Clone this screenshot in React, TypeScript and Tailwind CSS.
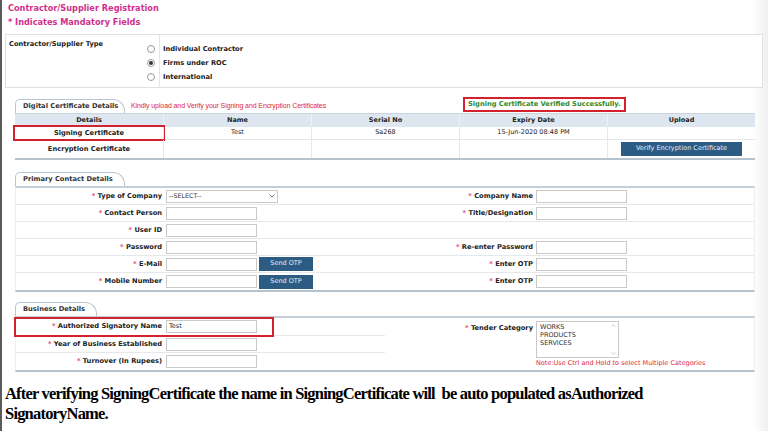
import React from "react";

const ff = { fontFamily: '"DejaVu Sans", Verdana, sans-serif' };

function Req({ children }: { children: React.ReactNode }) {
  return (
    <span>
      <span className="text-[#e04a7c]">* </span>
      {children}
    </span>
  );
}

function Field({ w = "w-[91px]", value = "" }: { w?: string; value?: string }) {
  return (
    <div className={`${w} h-[13px] border border-[#c9c9c9] bg-white px-[2px] text-[6.5px] leading-[11px] font-normal text-[#222]`}>
      {value}
    </div>
  );
}

function OtpButton() {
  return (
    <div className="ml-[2px] flex h-[14px] w-[54px] items-center justify-center bg-[#2c5c84] text-[6.5px] font-normal text-[#e6eef5]">
      Send OTP
    </div>
  );
}

function Tab({ label, w }: { label: string; w: string }) {
  return (
    <div className={`${w} flex h-[14px] items-center rounded-tl-[5px] rounded-tr-[12px] border border-b-0 border-[#b9c6d2] bg-white pl-[7px] text-[6.7px] font-bold text-[#333]`}>
      {label}
    </div>
  );
}

function Radio({ checked }: { checked?: boolean }) {
  return (
    <span className="flex h-[8px] w-[8px] items-center justify-center rounded-full border border-[#9a9a9a] bg-white">
      {checked && <span className="h-[4px] w-[4px] rounded-full bg-[#333]" />}
    </span>
  );
}

const certHead = ["Details", "Name", "Serial No", "Expiry Date", "Upload"];

const contactRows: [string, React.ReactNode, string, React.ReactNode][] = [
  [
    "Type of Company",
    <div className="flex h-[13px] w-[112px] items-center justify-between border border-[#c9c9c9] bg-white px-[2px] text-[6.3px] font-normal text-[#333]">
      <span>--SELECT--</span>
      <svg width="6" height="4" viewBox="0 0 6 4">
        <path d="M0.5 0.5 L3 3 L5.5 0.5" stroke="#666" strokeWidth="0.9" fill="none" />
      </svg>
    </div>,
    "Company Name",
    <Field />,
  ],
  ["Contact Person", <Field />, "Title/Designation", <Field />],
  ["User ID", <Field />, "", null],
  ["Password", <Field />, "Re-enter Password", <Field />],
  [
    "E-Mail",
    <div className="flex items-center">
      <Field />
      <OtpButton />
    </div>,
    "Enter OTP",
    <Field />,
  ],
  [
    "Mobile Number",
    <div className="flex items-center">
      <Field />
      <OtpButton />
    </div>,
    "Enter OTP",
    <Field />,
  ],
];

export default function App() {
  return (
    <div
      className="flex h-[431px] w-[768px] overflow-hidden bg-gradient-to-r from-white via-white via-[98%] to-[#efefef] text-[#222]"
      style={ff}
    >
      <div className="w-[2px] shrink-0 bg-[#5a5a5a]" />
      <div className="flex w-[761px] flex-col pl-[3px]">
        {/* Header */}
        <div className="ml-[3px] pt-[1px] font-stretch-condensed text-[9.1px] font-bold leading-[14px] text-[#d0308c]">
          <div>Contractor/Supplier Registration</div>
          <div>* Indicates Mandatory Fields</div>
        </div>

        {/* Contractor type */}
        <div className="mt-[5px] flex h-[54px] w-[758px] border border-[#e0e0e0] bg-white text-[6.7px] font-bold">
          <div className="w-[141px] pl-[3px] pt-[4px]">Contractor/Supplier Type</div>
          <div className="flex w-[12px] flex-col pt-[7px]">
            <div className="flex h-[14px] items-center"><Radio /></div>
            <div className="flex h-[14px] items-center"><Radio checked /></div>
            <div className="flex h-[14px] items-center"><Radio /></div>
          </div>
          <div className="flex flex-col border-l border-[#e6e6e6] pl-[3px] pt-[7px]">
            <div className="flex h-[14px] items-center">Individual Contractor</div>
            <div className="flex h-[14px] items-center">Firms under ROC</div>
            <div className="flex h-[14px] items-center">International</div>
          </div>
        </div>

        {/* Digital certificate */}
        <div className="ml-[10px] mt-[11px] w-[740px]">
          <div className="flex h-[14px] items-end">
            <div className="flex w-[444px] items-end">
              <Tab label="Digital Certificate Details" w="w-[110px]" />
              <span
                className="ml-[6px] pb-[2px] text-[7px] leading-[10px] tracking-[-0.1px] text-[#e0283a]"
                style={{ fontFamily: '"Liberation Sans Narrow", "Liberation Sans", Arial, sans-serif' }}
              >
                Kindly upload and Verify your Signing and Encryption Certificates
              </span>
            </div>
            <span className="mb-[1px] ml-[4px] border-2 border-[#d3212d] px-[3px] text-[6.7px] font-bold leading-[11px] text-[#2f8a2f]">
              Signing Certificate Verified Successfully.
            </span>
          </div>
          <div className="border-b-2 border-[#b5c3cf] text-[6.5px]">
            <div className="grid h-[14px] grid-cols-5 border-t border-[#c9d4de] bg-[#dee7ef] font-bold">
              {certHead.map((h, i) => (
                <div key={h} className={`flex items-center justify-center ${i ? "border-l border-[#eef2f6]" : ""}`}>
                  {h}
                </div>
              ))}
            </div>
            <div className="grid h-[13px] grid-cols-5 border-b border-[#e3e8ec]">
              <div className="flex items-center justify-center text-[6.7px] font-bold outline-2 outline-[#d3212d]">
                Signing Certificate
              </div>
              <div className="flex items-center justify-center border-l border-[#e3e8ec]">Test</div>
              <div className="flex items-center justify-center border-l border-[#e3e8ec]">Sa268</div>
              <div className="flex items-center justify-center border-l border-[#e3e8ec]">15-Jun-2020 08:48 PM</div>
              <div className="border-l border-[#e3e8ec]" />
            </div>
            <div className="grid h-[18px] grid-cols-5">
              <div className="flex items-center justify-center text-[6.7px] font-bold">Encryption Certificate</div>
              <div className="border-l border-[#e3e8ec]" />
              <div className="border-l border-[#e3e8ec]" />
              <div className="border-l border-[#e3e8ec]" />
              <div className="flex items-center justify-center border-l border-[#e3e8ec]">
                <div className="flex h-[14px] w-[121px] items-center justify-center bg-[#2c5c84] text-[#e6eef5]">
                  Verify Encryption Certificate
                </div>
              </div>
            </div>
          </div>
        </div>

        {/* Primary contact */}
        <div className="ml-[10px] mt-[12px] w-[740px]">
          <Tab label="Primary Contact Details" w="w-[110px]" />
          <div className="border-x border-b-2 border-t-2 border-x-[#eceff2] border-b-[#b5c3cf] border-t-[#c3cfda] text-[6.7px] font-bold">
            {contactRows.map(([l1, f1, l2, f2], i) => (
              <div
                key={i}
                className={`grid h-[17px] grid-cols-[148px_221px_150px_1fr] items-center ${i < 5 ? "border-b border-[#e6e9ec]" : ""}`}
              >
                <div className="pr-[2px] text-right">{l1 && <Req>{l1}</Req>}</div>
                <div className="pl-[2px]">{f1}</div>
                <div className="pr-[2px] text-right">{l2 && <Req>{l2}</Req>}</div>
                <div className="pl-[1px]">{f2}</div>
              </div>
            ))}
          </div>
        </div>

        {/* Business details */}
        <div className="ml-[10px] mt-[10px] w-[740px]">
          <Tab label="Business Details" w="w-[82px]" />
          <div className="flex border-x border-b-2 border-t-2 border-x-[#eceff2] border-b-[#b5c3cf] border-t-[#c3cfda] text-[6.7px] font-bold">
            <div className="w-[369px]">
              <div className="flex h-[18px] items-center border-b border-[#e6e9ec]">
                <div className="flex h-[16px] w-[256px] items-center outline-2 outline-[#d3212d]">
                  <div className="w-[148px] pr-[2px] text-right"><Req>Authorized Signatory Name</Req></div>
                  <div className="pl-[2px]"><Field value="Test" /></div>
                </div>
              </div>
              <div className="flex h-[17px] items-center border-b border-[#e6e9ec]">
                <div className="w-[148px] pr-[2px] text-right"><Req>Year of Business Established</Req></div>
                <div className="pl-[2px]"><Field /></div>
              </div>
              <div className="flex h-[17px] items-center">
                <div className="w-[148px] pr-[2px] text-right"><Req>Turnover (In Rupees)</Req></div>
                <div className="pl-[2px]"><Field /></div>
              </div>
            </div>
            <div className="flex flex-1">
              <div className="w-[150px] pr-[2px] pt-[5px] text-right"><Req>Tender Category</Req></div>
              <div className="pl-[1px] pt-[3px]">
                <div className="flex h-[37px] w-[83px] border border-[#c9c9c9] bg-white">
                  <div className="flex-1 pl-[3px] pt-[1px] text-[6.5px] font-normal leading-[8px] text-[#333]">
                    <div>WORKS</div>
                    <div>PRODUCTS</div>
                    <div>SERVICES</div>
                  </div>
                  <div className="flex w-[9px] flex-col items-center justify-between py-[2px]">
                    <svg width="5" height="3" viewBox="0 0 5 3"><path d="M0.5 2.5 L2.5 0.5 L4.5 2.5" stroke="#bbb" strokeWidth="0.8" fill="none" /></svg>
                    <svg width="5" height="3" viewBox="0 0 5 3"><path d="M0.5 0.5 L2.5 2.5 L4.5 0.5" stroke="#bbb" strokeWidth="0.8" fill="none" /></svg>
                  </div>
                </div>
                <div className="mt-[1px] text-[6.5px] font-normal leading-[9px] text-[#e0283a]">
                  Note:Use Ctrl and Hold to select Multiple Categories
                </div>
              </div>
            </div>
          </div>
        </div>

        {/* Caption */}
        <div
          className="mt-[12px] text-[16.5px] font-bold leading-[20px] tracking-[-0.8px] text-black"
          style={{ fontFamily: '"Liberation Serif", "Times New Roman", serif' }}
        >
          After verifying SigningCertificate the name in SigningCertificate will&nbsp; be auto populated asAuthorized
          <br />
          SignatoryName.
        </div>
      </div>
    </div>
  );
}
